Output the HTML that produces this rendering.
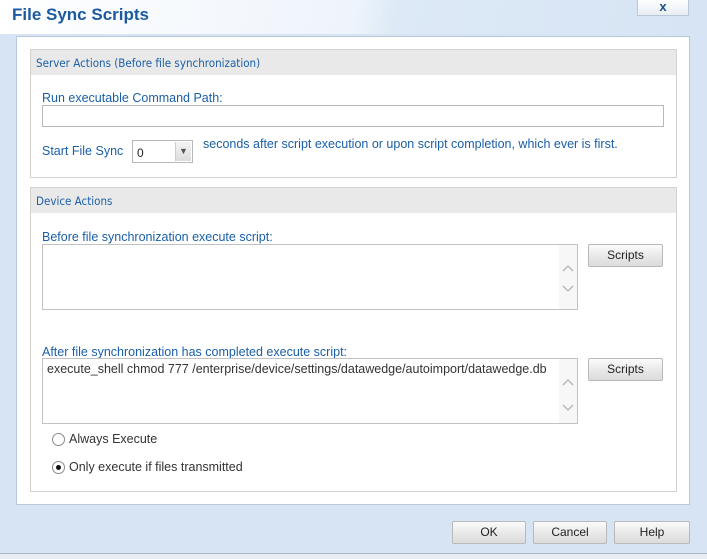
<!DOCTYPE html>
<html><head><style>
*{box-sizing:border-box;margin:0;padding:0}
body{width:707px;height:559px;overflow:hidden;background:#d6e4f4;font-family:"Liberation Sans",sans-serif;font-size:12.5px;color:#1a5fa8;position:relative}
.abs{position:absolute}
.title{left:0;top:0;width:707px;height:34px;background:linear-gradient(100deg,#ffffff 0%,#eef4fb 50%,#dde9f6 56%,#d6e4f4 100%)}
.title span{position:absolute;left:12px;top:5px;font:bold 17px "Liberation Sans",sans-serif;color:#1c5aa0}
.close{left:637px;top:-2px;width:52px;height:18px;border:1px solid #b9c7d7;background:linear-gradient(#fff,#e9eef4);text-align:center;font:bold 13px "Liberation Sans",sans-serif;color:#1c4f8f;line-height:16px}
.panel{left:16px;top:36px;width:674px;height:469px;background:#fff;border:1px solid #b9c9dc}
.sec{border:1px solid #d2d2d2;background:#fff}
.hdr{background:#e9e9e9;height:25px;line-height:27px;padding-left:5px;font-size:11.5px;color:#1a5fa8;font-family:"DejaVu Sans Condensed","Liberation Sans Narrow",sans-serif}
.lbl{font-size:12.5px;color:#1a5fa8;white-space:nowrap}
.inp{border:1px solid #b8b8b8;background:#fff}
.btn{border:1px solid #b9b9b9;border-radius:2px;background:linear-gradient(#fbfbfb,#e6e6e6 60%,#dcdcdc);text-align:center;color:#222;font-size:12px;line-height:21px}
.ta{border:1px solid #c2c2c2;background:#fff;color:#333;font-size:12.5px;padding:3px 4px;white-space:nowrap}
.sb{position:absolute;right:0;top:0;width:18px;height:100%;background:#f7f7f7;color:#b8b8b8}
.radio{width:13px;height:13px;border:1px solid #8a8a8a;border-radius:50%;background:#fff}
</style></head><body>
<div class="abs title"><span>File Sync Scripts</span></div>
<div class="abs close">x</div>
<div class="abs panel"></div>
<div class="abs sec" style="left:30px;top:49px;width:647px;height:129px"><div class="hdr">Server Actions (Before file synchronization)</div></div>
<div class="abs lbl" style="left:42px;top:91px">Run executable Command Path:</div>
<div class="abs inp" style="left:42px;top:105px;width:622px;height:22px"></div>
<div class="abs lbl" style="left:42px;top:144px">Start File Sync</div>
<div class="abs inp" style="left:132px;top:140px;width:61px;height:23px;color:#222;font-size:12px;padding:5px 0 0 4px">0
<div style="position:absolute;right:1px;top:1px;width:16px;height:19px;background:linear-gradient(#f4f4f4,#dcdcdc);border-left:1px solid #ccc;color:#555;font-size:9px;text-align:center;line-height:18px">&#9660;</div></div>
<div class="abs lbl" style="left:203px;top:137px">seconds after script execution or upon script completion, which ever is first.</div>
<div class="abs sec" style="left:30px;top:187px;width:647px;height:305px"><div class="hdr">Device Actions</div></div>
<div class="abs lbl" style="left:42px;top:230px">Before file synchronization execute script:</div>
<div class="abs ta" style="left:42px;top:244px;width:536px;height:66px"><div class="sb"><svg width="18" height="64"><path d="M4 26l5-5 5 5M4 41l5 5 5-5" fill="none" stroke="#b5b5b5" stroke-width="1.3"/></svg></div></div>
<div class="abs btn" style="left:588px;top:244px;width:75px;height:23px">Scripts</div>
<div class="abs lbl" style="left:42px;top:345px">After file synchronization has completed execute script:</div>
<div class="abs ta" style="left:42px;top:358px;width:536px;height:66px">execute_shell chmod 777 /enterprise/device/settings/datawedge/autoimport/datawedge.db<div class="sb"><svg width="18" height="64"><path d="M4 26l5-5 5 5M4 46l5 5 5-5" fill="none" stroke="#b5b5b5" stroke-width="1.3"/></svg></div></div>
<div class="abs btn" style="left:588px;top:358px;width:75px;height:23px">Scripts</div>
<div class="abs radio" style="left:52px;top:433px"></div>
<div class="abs" style="left:69px;top:432px;color:#333;font-size:12.5px">Always Execute</div>
<div class="abs radio" style="left:52px;top:461px"><div style="width:5px;height:5px;border-radius:50%;background:#111;margin:3px"></div></div>
<div class="abs" style="left:69px;top:460px;color:#333;font-size:12.5px">Only execute if files transmitted</div>
<div class="abs btn" style="left:452px;top:521px;width:74px;height:23px">OK</div>
<div class="abs btn" style="left:533px;top:521px;width:74px;height:23px">Cancel</div>
<div class="abs btn" style="left:614px;top:521px;width:76px;height:23px">Help</div>
<div class="abs" style="left:0;top:553px;width:707px;height:1px;background:#a9b6c4"></div>
<div class="abs" style="left:0;top:554px;width:707px;height:5px;background:#e6edf5"></div>
</body></html>
